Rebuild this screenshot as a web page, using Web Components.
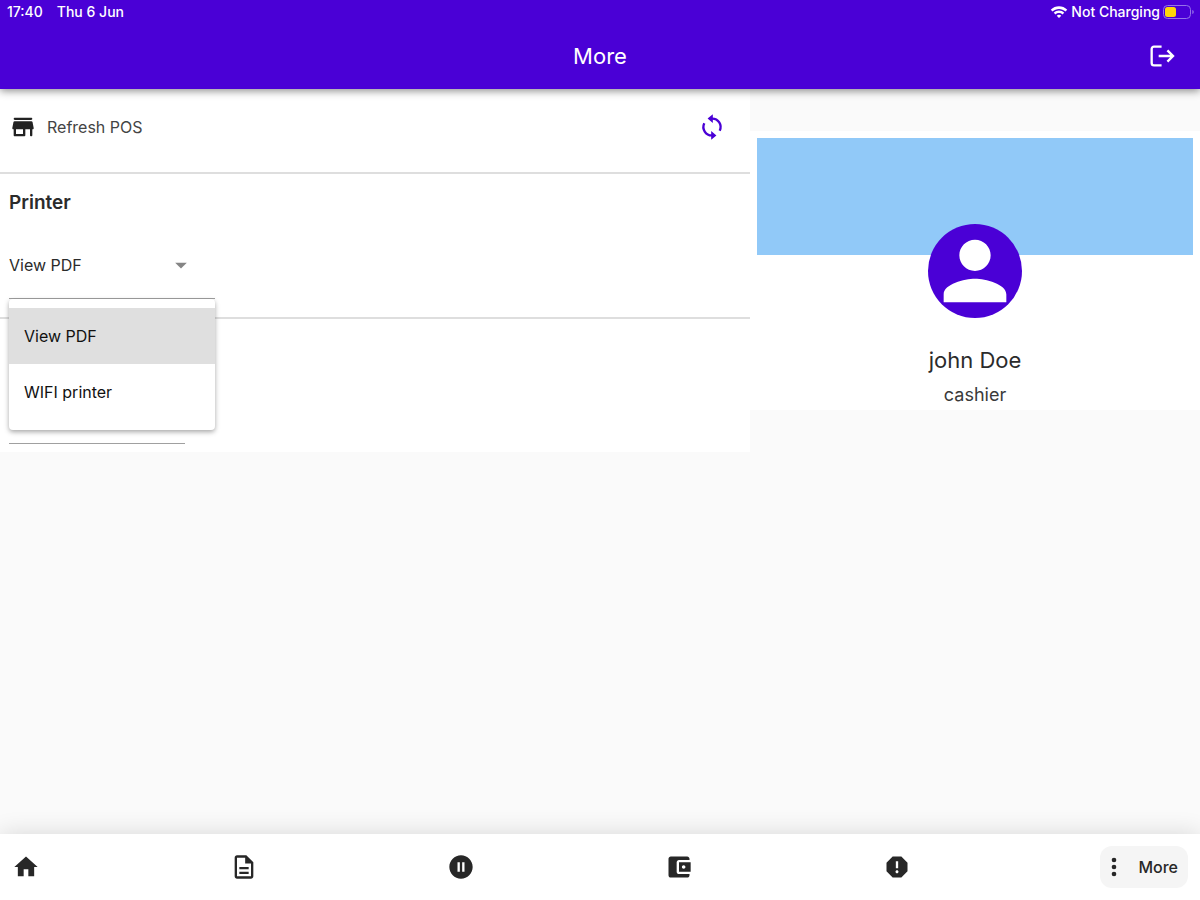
<!DOCTYPE html>
<html lang="en">
<head>
<meta charset="utf-8">
<meta name="viewport" content="width=device-width, initial-scale=1">
<title>More</title>
<style>
  body {
    margin: 0;
    font-family: Inter, "Liberation Sans", sans-serif;
    color: #2b2b2b;
    --primary: #4a00d6;
    --line: #dedede;
  }
</style>
</head>
<body>
<pos-app></pos-app>

<script>
const ICONS = {
  store: '<path d="M5 6h14c.55 0 1-.45 1-1s-.45-1-1-1H5c-.55 0-1 .45-1 1s.45 1 1 1zm15.16 1.8c-.09-.46-.5-.8-.98-.8H4.82c-.48 0-.89.34-.98.8l-1 5c-.12.62.35 1.2.98 1.2H4v5c0 .55.45 1 1 1h8c.55 0 1-.45 1-1v-5h4v5c0 .55.45 1 1 1s1-.45 1-1v-5h.18c.63 0 1.1-.58.98-1.2l-1-5zM12 18H6v-4h6v4z"/>',
  sync: '<path d="M12 4.800a7.200 7.200 0 0 1 6.600 10.400M12 19.200A7.200 7.200 0 0 1 5.400 8.800" fill="none" stroke="currentColor" stroke-width="2"/><path d="M12.700 1v7.600L8.200 4.800zM11.300 23v-7.600l4.500 3.800z"/>',
  logout: '<path d="M12.500 3.900H6a2 2 0 0 0-2 2v12.200a2 2 0 0 0 2 2h6.500M10 12h12M17.500 7.200l4.800 4.800-4.800 4.800" fill="none" stroke="currentColor" stroke-width="2"/>',
  home: '<path d="M10 20v-6h4v6h5v-8h3L12 3 2 12h3v8z"/>',
  file: '<path d="M8 16h8v2H8zm0-4h8v2H8zm6-10H6c-1.100 0-2 .9-2 2v16c0 1.100.89 2 1.990 2H18c1.100 0 2-.9 2-2V8l-6-6zm4 18H6V4h7v5h5v11z"/>',
  pause: '<path d="M12 2C6.480 2 2 6.480 2 12s4.480 10 10 10 10-4.480 10-10S17.520 2 12 2zm-1 14H9V8h2v8zm4 0h-2V8h2v8z"/>',
  wallet: '<path d="M21 18v1c0 1.100-.9 2-2 2H5c-1.110 0-2-.9-2-2V5c0-1.100.89-2 2-2h14c1.100 0 2 .9 2 2v1h-9c-1.110 0-2 .9-2 2v8c0 1.100.89 2 2 2h9zm-9-2h10V8H12v8zm4-2.500c-.83 0-1.500-.67-1.500-1.500s.67-1.500 1.500-1.500 1.500.67 1.500 1.500-.67 1.500-1.500 1.500z"/>',
  report: '<path d="M15.730 3H8.270L3 8.270v7.460L8.270 21h7.460L21 15.730V8.270L15.730 3zM12 17.300c-.72 0-1.300-.58-1.300-1.300s.58-1.300 1.300-1.300 1.300.58 1.300 1.300-.58 1.300-1.300 1.300zm1-4.300h-2V7h2v6z"/>',
  dots: '<circle cx="12" cy="6" r="2"/><circle cx="12" cy="12" r="2"/><circle cx="12" cy="18" r="2"/>',
  person: '<path d="M12 12c2.210 0 4-1.790 4-4s-1.790-4-4-4-4 1.790-4 4 1.790 4 4 4zm0 2c-2.670 0-8 1.340-8 4v2h16v-2c0-2.660-5.330-4-8-4z"/>',
  arrow: '<path d="M7 10l5 5 5-5z"/>',
  wifi: '<path d="M1 9l2.400 2.400c4.750-4.750 12.450-4.750 17.200 0L23 9C16.930 2.930 7.080 2.930 1 9zm8 8l3 3 3-3c-1.650-1.660-4.340-1.660-6 0zm-4-4l2.400 2.400c2.540-2.540 6.660-2.540 9.200 0L19 13C15.140 9.140 8.870 9.140 5 13z"/>'
};

class PosIcon extends HTMLElement {
  connectedCallback() {
    this.attachShadow({ mode: 'open' });
    this.shadowRoot.innerHTML = `
      <style>
        :host { display: block; flex: none; width: var(--icon-size, 28px); height: var(--icon-size, 28px); }
        svg { display: block; width: 100%; height: 100%; fill: currentColor; }
      </style>
      <svg viewBox="0 0 24 24" aria-hidden="true">${ICONS[this.getAttribute('name')]}</svg>
    `;
  }
}

class StatusBar extends HTMLElement {
  connectedCallback() {
    this.attachShadow({ mode: 'open' });
    this.shadowRoot.innerHTML = `
      <style>
        :host {
          display: flex;
          justify-content: space-between;
          padding: 0 6px 0 7px;
          height: 24px;
          font-size: 14px;
          line-height: 24px;
          font-weight: 500;
        }
        .group { display: flex; align-items: center; }
        .left { gap: 14px; }
        .right { gap: 3px; }
        pos-icon { --icon-size: 18px; }
        svg { display: block; }
      </style>
      <div class="group left"><span>17:40</span><span>Thu 6 Jun</span></div>
      <div class="group right">
        <pos-icon name="wifi"></pos-icon>
        <span>Not Charging</span>
        <svg width="31" height="14" viewBox="0 0 31 14" aria-hidden="true">
          <rect x="0.500" y="0.500" width="27" height="13" rx="4" fill="none" stroke="#9672ea"/>
          <rect x="2" y="2" width="11" height="10" rx="2.500" fill="#ffd60a"/>
          <path d="M29.300 5v4c1-.4 1.400-1.100 1.400-2s-.4-1.600-1.400-2z" fill="#9672ea"/>
        </svg>
      </div>
    `;
  }
}

class AppHeader extends HTMLElement {
  connectedCallback() {
    this.attachShadow({ mode: 'open' });
    this.shadowRoot.innerHTML = `
      <style>
        :host {
          display: block;
          position: relative;
          z-index: 2;
          background: var(--primary);
          color: #fff;
          box-shadow: 0 2px 8px rgba(0, 0, 0, 0.45);
        }
        .bar {
          display: grid;
          grid-template-columns: 1fr auto 1fr;
          align-items: center;
          height: 63px;
          padding: 0 25px 2px;
        }
        h1 { grid-column: 2; margin: 0; font-size: 22px; line-height: 28px; font-weight: 400; }
        button {
          justify-self: end;
          padding: 0;
          border: 0;
          background: none;
          color: inherit;
        }
      </style>
      <status-bar></status-bar>
      <div class="bar">
        <h1><slot></slot></h1>
        <button type="button" aria-label="Log out"><pos-icon name="logout"></pos-icon></button>
      </div>
    `;
  }
}

class PrinterSelect extends HTMLElement {
  connectedCallback() {
    this.attachShadow({ mode: 'open' });
    this.shadowRoot.innerHTML = `
      <style>
        :host { display: block; position: relative; width: 206px; }
        .field {
          display: flex;
          align-items: center;
          border-bottom: 1px solid #a0a0a0;
        }
        select {
          appearance: none;
          flex: 1;
          height: 66px;
          padding: 0;
          border: 0;
          background: none;
          color: #2b2b2b;
          font: 400 16px/24px Inter, "Liberation Sans", sans-serif;
        }
        pos-icon { margin-right: 20px; color: #858585; }
        .menu {
          position: absolute;
          top: 100%;
          left: 0;
          right: 0;
          z-index: 1;
          padding: 9px 0 10px;
          border-radius: 4px;
          background: #fff;
          box-shadow: 0 2px 5px rgba(0, 0, 0, 0.35);
        }
        .menu button {
          display: block;
          width: 100%;
          height: 56px;
          padding: 0 15px;
          border: 0;
          background: none;
          color: #111;
          font: 400 16px/24px Inter, "Liberation Sans", sans-serif;
          text-align: left;
        }
        .menu button[aria-selected="true"] { background: #dfdfdf; }
      </style>
      <div class="field">
        <select aria-label="Printer"><option>View PDF</option><option>WIFI printer</option></select>
        <pos-icon name="arrow"></pos-icon>
      </div>
      <div class="menu" role="listbox" aria-label="Printer">
        <button type="button" role="option" aria-selected="true">View PDF</button>
        <button type="button" role="option" aria-selected="false">WIFI printer</button>
      </div>
    `;
  }
}

class SettingsPanel extends HTMLElement {
  connectedCallback() {
    this.attachShadow({ mode: 'open' });
    this.shadowRoot.innerHTML = `
      <style>
        :host { display: block; background: #fff; }
        section { border-bottom: 2px solid var(--line); }
        .refresh {
          display: flex;
          align-items: center;
          gap: 10px;
          height: 64px;
          padding: 6px 24px 13px 9px;
          font-size: 16px;
          line-height: 24px;
          color: #444;
        }
        .refresh pos-icon { color: #222; }
        .refresh button {
          margin-left: auto;
          padding: 0;
          border: 0;
          background: none;
        }
        .refresh button pos-icon { color: var(--primary); }
        .printer { padding: 16px 9px 18px; }
        h2 { margin: 0 0 16px; font-size: 19px; line-height: 26px; font-weight: 600; }
        .more { display: flex; height: 125px; padding: 0 9px 8px; border: 0; }
        .more input {
          width: 176px;
          padding: 0;
          border: 0;
          border-bottom: 1px solid #a0a0a0;
          background: none;
        }
      </style>
      <section class="refresh">
        <pos-icon name="store"></pos-icon>
        <span>Refresh POS</span>
        <button type="button" aria-label="Refresh"><pos-icon name="sync"></pos-icon></button>
      </section>
      <section class="printer">
        <h2>Printer</h2>
        <printer-select></printer-select>
      </section>
      <section class="more"><input type="text" aria-label="Printer address"></section>
    `;
  }
}

class ProfileCard extends HTMLElement {
  connectedCallback() {
    this.attachShadow({ mode: 'open' });
    this.shadowRoot.innerHTML = `
      <style>
        :host {
          display: flex;
          flex-direction: column;
          align-items: center;
          margin-top: 42px;
          padding: 7px 7px 0;
          background: #fff;
        }
        .banner { width: 100%; height: 117px; background: #91c9f8; }
        .avatar {
          display: grid;
          place-items: center;
          width: 94px;
          height: 94px;
          margin-top: -31px;
          margin-bottom: 27px;
          border-radius: 50%;
          background: var(--primary);
          color: #fff;
          --icon-size: 94px;
        }
        .name { font-size: 22px; line-height: 30px; font-weight: 400; }
        .role { font-size: 18px; line-height: 30px; padding-top: 5px; color: #3a3a3a; }
      </style>
      <div class="banner"></div>
      <div class="avatar"><pos-icon name="person"></pos-icon></div>
      <div class="name"><slot name="name"></slot></div>
      <div class="role"><slot name="role"></slot></div>
    `;
  }
}

class BottomNav extends HTMLElement {
  connectedCallback() {
    this.attachShadow({ mode: 'open' });
    this.shadowRoot.innerHTML = `
      <style>
        :host {
          display: block;
          background: #fff;
          box-shadow: 0 0 24px rgba(0, 0, 0, 0.14);
        }
        nav {
          display: flex;
          justify-content: space-between;
          align-items: center;
          height: 66px;
          padding: 0 12px;
        }
        button {
          display: flex;
          align-items: center;
          padding: 0;
          border: 0;
          background: none;
          color: #272727;
          font: 500 16px/24px Inter, "Liberation Sans", sans-serif;
        }
        .active {
          gap: 10px;
          height: 42px;
          padding: 0 10px 0 0;
          border-radius: 12px;
          background: #f5f5f5;
        }
      </style>
      <nav>
        <button type="button" aria-label="Home"><pos-icon name="home"></pos-icon></button>
        <button type="button" aria-label="Orders"><pos-icon name="file"></pos-icon></button>
        <button type="button" aria-label="On hold"><pos-icon name="pause"></pos-icon></button>
        <button type="button" aria-label="Wallet"><pos-icon name="wallet"></pos-icon></button>
        <button type="button" aria-label="Reports"><pos-icon name="report"></pos-icon></button>
        <button type="button" class="active" aria-current="page"><pos-icon name="dots"></pos-icon>More</button>
      </nav>
    `;
  }
}

class PosApp extends HTMLElement {
  connectedCallback() {
    this.attachShadow({ mode: 'open' });
    this.shadowRoot.innerHTML = `
      <style>
        :host {
          display: flex;
          flex-direction: column;
          min-height: 100vh;
          background: #fafafa;
        }
        main {
          display: grid;
          grid-template-columns: 5fr 3fr;
          align-items: start;
          flex: 1;
        }
      </style>
      <app-header>More</app-header>
      <main>
        <settings-panel></settings-panel>
        <profile-card>
          <span slot="name">john Doe</span>
          <span slot="role">cashier</span>
        </profile-card>
      </main>
      <bottom-nav></bottom-nav>
    `;
  }
}

customElements.define('pos-icon', PosIcon);
customElements.define('status-bar', StatusBar);
customElements.define('app-header', AppHeader);
customElements.define('printer-select', PrinterSelect);
customElements.define('settings-panel', SettingsPanel);
customElements.define('profile-card', ProfileCard);
customElements.define('bottom-nav', BottomNav);
customElements.define('pos-app', PosApp);
</script>
</body>
</html>
